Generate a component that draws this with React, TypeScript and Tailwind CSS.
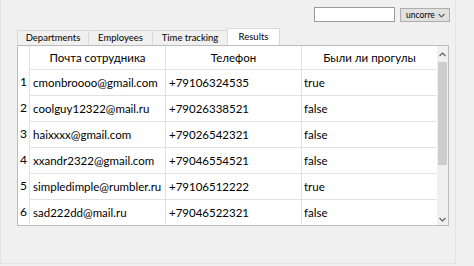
import React from 'react';

interface Row {
  email: string;
  phone: string;
  absent: string;
}

const rows: Row[] = [
  { email: 'cmonbroooo@gmail.com', phone: '+79106324535', absent: 'true' },
  { email: 'coolguy12322@mail.ru', phone: '+79026338521', absent: 'false' },
  { email: 'haixxxx@gmail.com', phone: '+79026542321', absent: 'false' },
  { email: 'xxandr2322@gmail.com', phone: '+79046554521', absent: 'false' },
  { email: 'simpledimple@rumbler.ru', phone: '+79106512222', absent: 'true' },
  { email: 'sad222dd@mail.ru', phone: '+79046522321', absent: 'false' },
];

const tabs = [
  { name: 'Departments', w: 'w-[72px]' },
  { name: 'Employees', w: 'w-[65px]' },
  { name: 'Time tracking', w: 'w-[76px]' },
];

function Chevron({ up }: { up?: boolean }) {
  return (
    <svg width="7" height="5" viewBox="0 0 7 5" className={up ? 'rotate-180' : ''}>
      <path d="M0.5 1 L3.5 4 L6.5 1" fill="none" stroke="#606060" strokeWidth="1.2" />
    </svg>
  );
}

export default function App() {
  return (
    <div
      className="w-[474px] h-[266px] bg-[#f0f0f0] overflow-hidden"
      style={{ fontFamily: 'Lato, "Noto Sans", sans-serif' }}
    >
      <div className="w-[456px] h-[264px] border-l border-r border-b border-[#e4e4e4] flex flex-col">
        {/* top controls */}
        <div className="flex justify-end items-start pt-[7px] pr-[5px] gap-[5px] h-[28px]">
          <div className="w-[81px] h-[15px] bg-white border border-[#9a9a9a]" />
          <div className="w-[50px] h-[14px] mt-[1px] bg-[#e1e1e1] border border-[#adadad] flex items-center justify-between pl-[5px] pr-[4px] text-[8.5px] leading-none text-black">
            <span>uncorre</span>
            <Chevron />
          </div>
        </div>

        {/* tabs */}
        <div className="flex items-end pl-[16px] h-[17px]">
          {tabs.map((t) => (
            <div
              key={t.name}
              className={`${t.w} h-[15px] bg-[#f0f0f0] border border-b-0 border-[#d9d9d9] -mr-[1px] flex items-center justify-center text-[9.5px] leading-none text-black`}
            >
              {t.name}
            </div>
          ))}
          <div className="w-[53px] h-[17px] bg-white border border-b-0 border-[#d9d9d9] flex items-center justify-center text-[9.5px] leading-none text-black">
            Results
          </div>
        </div>

        {/* table */}
        <div className="ml-[16px] w-[432px] h-[181px] border border-[#bcbcbc] bg-white flex text-[11.5px] text-black">
          <div className="flex-1 flex flex-col">
            <div className="grid grid-cols-[12px_136px_136px_135px] h-[23px] items-center">
              <div className="h-full border-r border-[#e2e2e2]" />
              <div className="h-full border-r border-[#e2e2e2] flex items-center justify-center">Почта сотрудника</div>
              <div className="h-full border-r border-[#e2e2e2] flex items-center justify-center">Телефон</div>
              <div className="h-full flex items-center justify-center">Были ли прогулы</div>
            </div>
            {rows.map((r, i) => (
              <div key={i} className="grid grid-cols-[12px_136px_136px_135px] h-[26px]">
                <div className="h-full border-r border-[#e2e2e2] flex items-center justify-center text-[12px]">{i + 1}</div>
                <div className="h-full border-r border-t border-[#e2e2e2] flex items-center pl-[3px] whitespace-nowrap overflow-hidden">{r.email}</div>
                <div className="h-full border-r border-t border-[#e2e2e2] flex items-center pl-[3px]">{r.phone}</div>
                <div className="h-full border-t border-[#e2e2e2] flex items-center pl-[2px]">{r.absent}</div>
              </div>
            ))}
          </div>
          {/* scrollbar */}
          <div className="w-[11px] h-full bg-[#f0f0f0] flex flex-col items-center">
            <div className="h-[16px] flex items-center justify-center">
              <Chevron up />
            </div>
            <div className="w-[9px] h-[103px] bg-[#cdcdcd]" />
            <div className="flex-1" />
            <div className="h-[12px] flex items-center justify-center">
              <Chevron />
            </div>
          </div>
        </div>
      </div>
    </div>
  );
}
